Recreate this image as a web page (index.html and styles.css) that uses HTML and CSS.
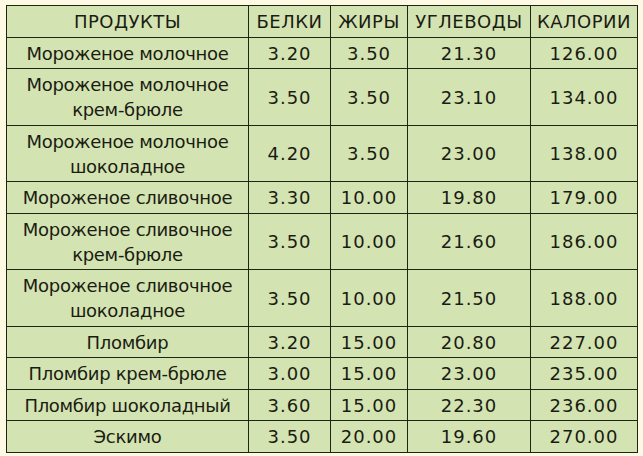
FILE: index.html
```html
<!DOCTYPE html>
<html lang="ru">
<head>
<meta charset="utf-8">
<link rel="stylesheet" href="styles.css">
</head>
<body>
<table class="nutr">
  <colgroup>
    <col class="c-name"><col class="c-b"><col class="c-f"><col class="c-u"><col class="c-k">
  </colgroup>
  <thead>
    <tr><th>ПРОДУКТЫ</th><th>БЕЛКИ</th><th>ЖИРЫ</th><th>УГЛЕВОДЫ</th><th>КАЛОРИИ</th></tr>
  </thead>
  <tbody>
    <tr><td class="name">Мороженое молочное</td><td>3.20</td><td>3.50</td><td>21.30</td><td>126.00</td></tr>
    <tr><td class="name">Мороженое молочное<br>крем-брюле</td><td>3.50</td><td>3.50</td><td>23.10</td><td>134.00</td></tr>
    <tr><td class="name">Мороженое молочное<br>шоколадное</td><td>4.20</td><td>3.50</td><td>23.00</td><td>138.00</td></tr>
    <tr><td class="name">Мороженое сливочное</td><td>3.30</td><td>10.00</td><td>19.80</td><td>179.00</td></tr>
    <tr><td class="name">Мороженое сливочное<br>крем-брюле</td><td>3.50</td><td>10.00</td><td>21.60</td><td>186.00</td></tr>
    <tr><td class="name">Мороженое сливочное<br>шоколадное</td><td>3.50</td><td>10.00</td><td>21.50</td><td>188.00</td></tr>
    <tr><td class="name">Пломбир</td><td>3.20</td><td>15.00</td><td>20.80</td><td>227.00</td></tr>
    <tr><td class="name">Пломбир крем-брюле</td><td>3.00</td><td>15.00</td><td>23.00</td><td>235.00</td></tr>
    <tr><td class="name">Пломбир шоколадный</td><td>3.60</td><td>15.00</td><td>22.30</td><td>236.00</td></tr>
    <tr><td class="name">Эскимо</td><td>3.50</td><td>20.00</td><td>19.60</td><td>270.00</td></tr>
  </tbody>
</table>
</body>
</html>
```
FILE: styles.css
```css
html, body {
  margin: 0;
  background: #fdf9e3;
}
body {
  padding: 5px 6px;
}
.nutr {
  border-collapse: collapse;
  table-layout: fixed;
  width: 631px;
  background: #d4e3b2;
  font-family: "DejaVu Sans", Verdana, sans-serif;
  font-size: 18px;
  color: #1a1c12;
}
.c-name { width: 242px; }
.c-b { width: 82px; }
.c-f { width: 77px; }
.c-u { width: 123px; }
.c-k { width: 107px; }
.nutr th, .nutr td {
  border: 1px solid #1c2613;
  text-align: center;
  vertical-align: middle;
  font-weight: normal;
  line-height: 25px;
  padding: 3px 0 2.5px;
  white-space: nowrap;
  letter-spacing: 1px;
}
.nutr th {
  letter-spacing: 0.5px;
}
.nutr td.name {
  letter-spacing: -0.3px;
}
```
